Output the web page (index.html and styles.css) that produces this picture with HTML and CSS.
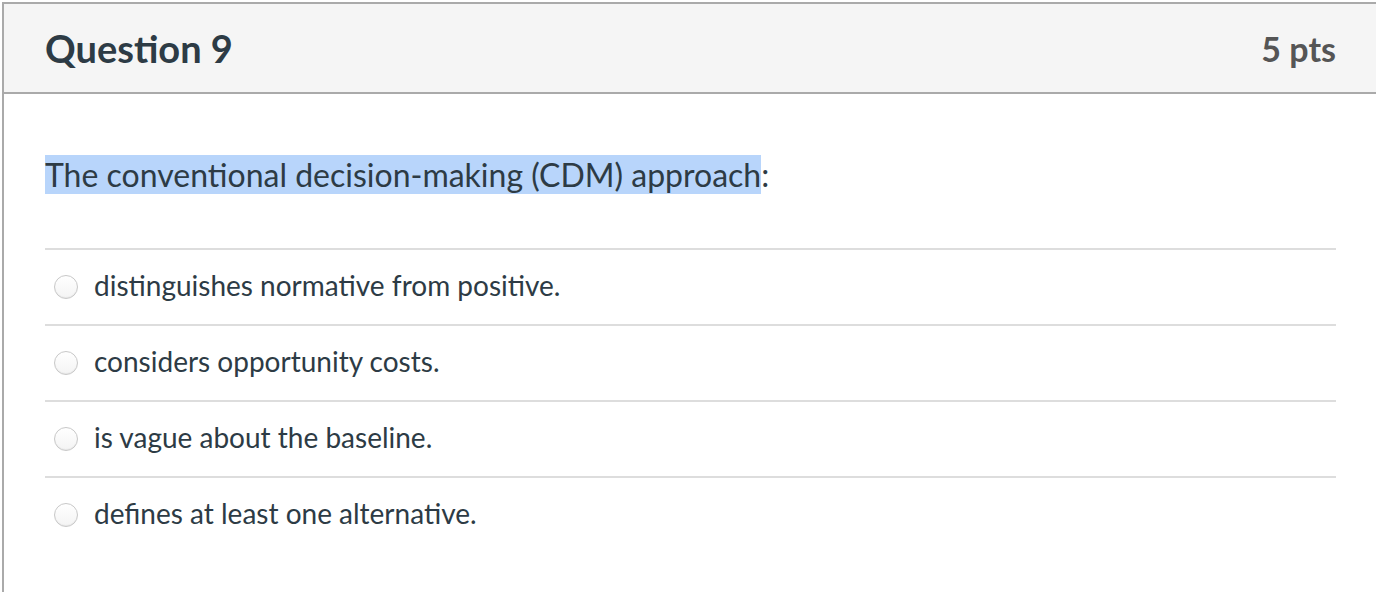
FILE: index.html
```html
<!DOCTYPE html>
<html>
<head>
<meta charset="utf-8">
<link rel="stylesheet" href="styles.css">
</head>
<body>
<div class="question">
  <div class="header">
    <h2 class="title">Question 9</h2>
    <div class="points">5 pts</div>
  </div>
  <div class="content">
    <p class="text"><span class="sel">The conventional decision-making (CDM) approach</span>:</p>
    <div class="answers">
      <label class="answer"><span class="radio"></span><span class="label">distinguishes normative from positive.</span></label>
      <label class="answer"><span class="radio"></span><span class="label">considers opportunity costs.</span></label>
      <label class="answer"><span class="radio"></span><span class="label">is vague about the baseline.</span></label>
      <label class="answer"><span class="radio"></span><span class="label">defines at least one alternative.</span></label>
    </div>
  </div>
</div>
</body>
</html>
```

FILE: styles.css
```css
html, body {
  margin: 0;
  padding: 0;
  background: #ffffff;
  overflow: hidden;
}
body {
  font-family: Lato, "Noto Sans", sans-serif;
  color: #2d3b45;
}
.question {
  margin: 2px 0 0 2px;
  border-left: 2px solid #aaaaaa;
  border-top: 2px solid #aaaaaa;
  height: 588px;
  overflow: hidden;
}
.header {
  display: flex;
  align-items: center;
  justify-content: space-between;
  height: 88px;
  background: #f5f5f5;
  border-bottom: 2px solid #aaaaaa;
  padding: 0 40px 0 41px;
}
.title {
  margin: 0;
  font-size: 38px;
  font-weight: 700;
  color: #2d3b45;
}
.points {
  font-size: 34px;
  font-weight: 700;
  color: #555555;
}
.content {
  padding: 62px 40px 0 41px;
}
.text {
  margin: 0;
  font-size: 32px;
  line-height: 37px;
}
.sel {
  background: #b8d5fb;
}
.answers {
  margin-top: 55px;
}
.answer {
  display: flex;
  align-items: center;
  height: 74px;
  border-top: 2px solid #dddddd;
  gap: 16px;
  padding-left: 9px;
}
.radio {
  width: 22px;
  height: 22px;
  border-radius: 50%;
  border: 1px solid #c8c8c8;
  background: linear-gradient(#ffffff, #f4f4f4);
  box-shadow: inset 0 -1px 1px rgba(0,0,0,0.05);
  flex: none;
}
.label {
  font-size: 28px;
  padding-bottom: 4px;
}
```
